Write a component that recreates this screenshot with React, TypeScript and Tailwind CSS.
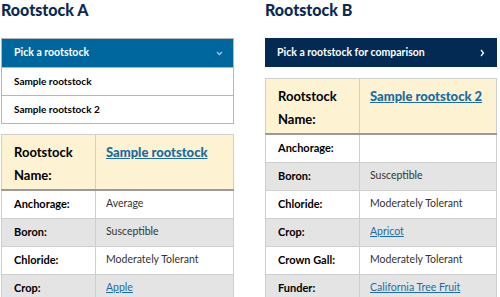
import React from 'react';

type Row = { label: string; value?: string; link?: boolean };

const rowsA: Row[] = [
  { label: 'Anchorage:', value: 'Average' },
  { label: 'Boron:', value: 'Susceptible' },
  { label: 'Chloride:', value: 'Moderately Tolerant' },
  { label: 'Crop:', value: 'Apple', link: true },
];

const rowsB: Row[] = [
  { label: 'Anchorage:' },
  { label: 'Boron:', value: 'Susceptible' },
  { label: 'Chloride:', value: 'Moderately Tolerant' },
  { label: 'Crop:', value: 'Apricot', link: true },
  { label: 'Crown Gall:', value: 'Moderately Tolerant' },
  { label: 'Funder:', value: 'California Tree Fruit', link: true },
];

const ChevronDown = () => (
  <svg width="7" height="5" viewBox="0 0 7 5" fill="none">
    <path d="M1 1l2.5 2.5L6 1" stroke="#9fc6e0" strokeWidth="1.3" />
  </svg>
);

const ChevronRight = () => (
  <svg width="5" height="8" viewBox="0 0 5 8" fill="none">
    <path d="M1 1l2.5 3L1 7" stroke="#ffffff" strokeWidth="1.3" />
  </svg>
);

const CompareTable = ({ name, rows }: { name: string; rows: Row[] }) => (
  <table className="w-full border-collapse border border-[#cfcfcf]">
    <thead>
      <tr className="bg-[#fdf2d2] border-b-2 border-[#9a9a9a]">
        <th className="w-[94px] border-r border-[#cfcfcf] pl-[12px] pt-[6px] pb-[2px] text-left align-top text-[13px] font-bold leading-[23px] text-black">
          Rootstock
          <br />
          Name:
        </th>
        <td className="pl-[10px] pt-[6px] align-top text-[13px] font-black leading-[23px]">
          <a href="#" className="text-[#1a6ca3] underline">
            {name}
          </a>
        </td>
      </tr>
    </thead>
    <tbody>
      {rows.map((r, i) => (
        <tr key={r.label} className={`h-[28px] border-b border-[#cfcfcf] ${i % 2 ? 'bg-[#e4e4e4]' : 'bg-white'}`}>
          <th className="border-r border-[#cfcfcf] pl-[12px] text-left text-[11px] font-bold text-black">{r.label}</th>
          <td className="pl-[10px] text-[10.5px] text-[#333]">
            {r.link ? (
              <a href="#" className="text-[#1a6ca3] underline">
                {r.value}
              </a>
            ) : (
              r.value
            )}
          </td>
        </tr>
      ))}
    </tbody>
  </table>
);

export default function App() {
  return (
    <div className="flex gap-[31px] bg-white pl-[1px] font-['Lato',sans-serif]">
      {/* Rootstock A */}
      <div className="w-[233px] shrink-0">
        <h2 className="h-[38px] pt-[1px] text-[16px] font-black leading-[18px] text-[#0b2a52]">Rootstock A</h2>
        <div className="border border-[#b5b5b5]">
          <div className="flex h-[28px] items-center justify-between bg-[#00679e] pl-[12px] pr-[10px] text-[10.5px] font-bold text-white">
            Pick a rootstock
            <ChevronDown />
          </div>
          <div className="flex h-[28px] items-center border-t border-[#b5b5b5] pl-[12px] text-[10px] font-bold text-black">
            Sample rootstock
          </div>
          <div className="flex h-[28px] items-center border-t border-[#b5b5b5] pl-[12px] text-[10px] font-bold text-black">
            Sample rootstock 2
          </div>
        </div>
        <div className="mt-[10px]">
          <CompareTable name="Sample rootstock" rows={rowsA} />
        </div>
      </div>

      {/* Rootstock B */}
      <div className="w-[232px] shrink-0">
        <h2 className="h-[38px] pt-[1px] text-[16px] font-black leading-[18px] text-[#0b2a52]">Rootstock B</h2>
        <div className="flex h-[29px] items-center justify-between bg-[#022a52] pl-[12px] pr-[12px] text-[10.5px] font-bold text-white">
          Pick a rootstock for comparison
          <ChevronRight />
        </div>
        <div className="mt-[11px]">
          <CompareTable name="Sample rootstock 2" rows={rowsB} />
        </div>
      </div>
    </div>
  );
}
